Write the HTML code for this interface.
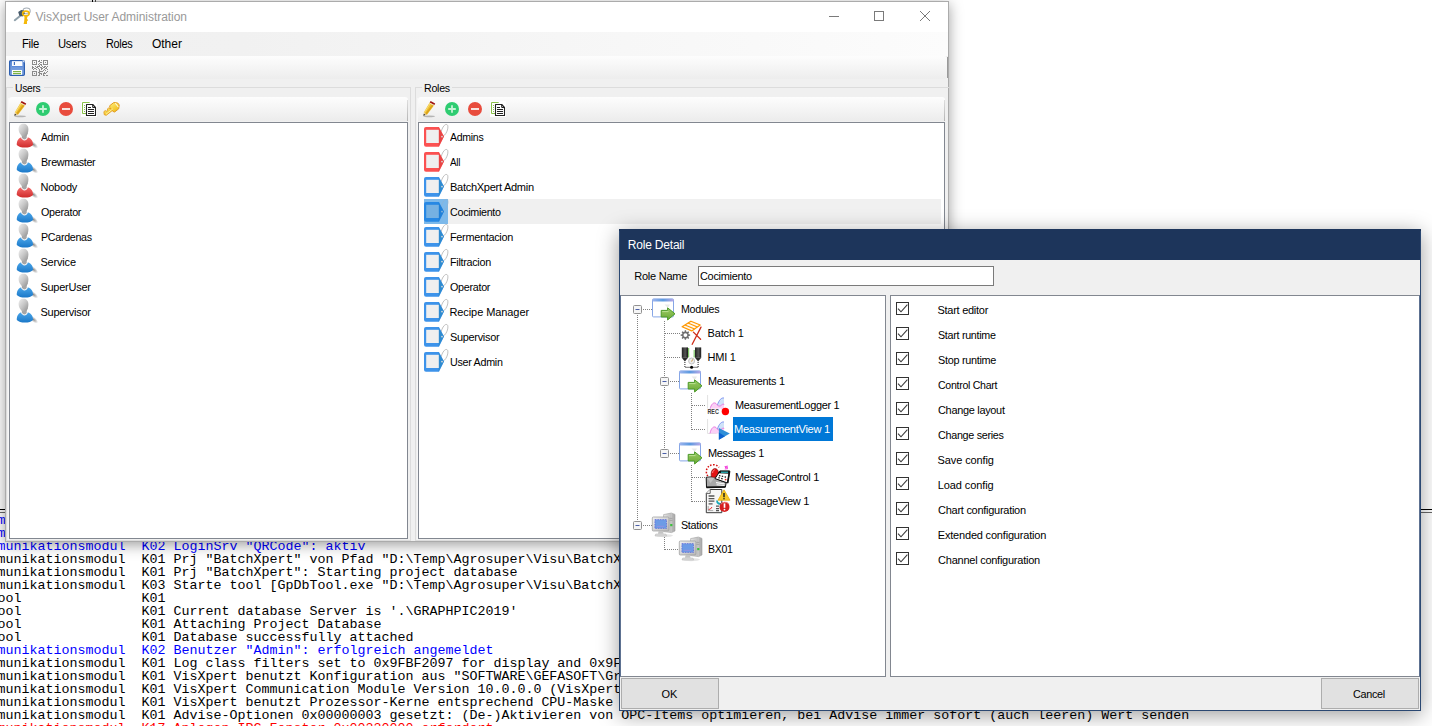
<!DOCTYPE html>
<html><head><meta charset="utf-8"><title>VisXpert User Administration</title>
<style>
*{box-sizing:border-box;margin:0;padding:0}
html,body{width:1432px;height:726px;overflow:hidden;background:#fff}
body{position:relative;font-family:"Liberation Sans",sans-serif;font-size:11px;color:#000}
.abs{position:absolute}
svg{overflow:visible}
.t{position:absolute;white-space:pre;font-family:"Liberation Sans",sans-serif}
.log{position:absolute;left:-2.5px;white-space:pre;font-family:"Liberation Mono",monospace;font-size:13.333px;line-height:13px;height:13px;color:#000}
.log.b{color:#0000ff}.log.r{color:#ff0000}
#main{position:absolute;left:5px;top:1px;width:944px;height:541px;background:#f0f0f0;border:1px solid #ababab;box-shadow:0 3px 13px rgba(0,0,0,.38)}
#dlg{position:absolute;left:619px;top:229px;width:802px;height:482px;background:#f0f0f0;border:1px solid #2b4872;box-shadow:0 4.4px 20px rgba(0,0,0,.39)}
.lb{position:absolute;background:#fff;border:1px solid #828790}
.vd{position:absolute;width:1px;background:repeating-linear-gradient(to bottom,#808080 0,#808080 1px,transparent 1px,transparent 2px)}
.hd{position:absolute;height:1px;background:repeating-linear-gradient(to right,#808080 0,#808080 1px,transparent 1px,transparent 2px)}
</style></head><body>
<svg width="0" height="0" style="position:absolute"><defs>
<linearGradient id="gHead" x1="0" y1="0" x2="1" y2="1"><stop offset="0" stop-color="#efefef"/><stop offset=".5" stop-color="#c6c6c6"/><stop offset="1" stop-color="#8e8e8e"/></linearGradient>
<linearGradient id="gRed" x1="0" y1="0" x2="0" y2="1"><stop offset="0" stop-color="#f46a6a"/><stop offset="1" stop-color="#cf2b2b"/></linearGradient>
<linearGradient id="gBlue" x1="0" y1="0" x2="0" y2="1"><stop offset="0" stop-color="#4aa6ea"/><stop offset="1" stop-color="#1b78c8"/></linearGradient>
<radialGradient id="gSh" cx=".5" cy=".5" r=".5"><stop offset="0" stop-color="#000" stop-opacity=".45"/><stop offset="1" stop-color="#000" stop-opacity="0"/></radialGradient>
<linearGradient id="gWinT" x1="0" y1="0" x2="1" y2="0"><stop offset="0" stop-color="#9fb4ee"/><stop offset=".5" stop-color="#5a9ae0"/><stop offset="1" stop-color="#b9a8e6"/></linearGradient>
<linearGradient id="gArr" x1="0" y1="0" x2="0" y2="1"><stop offset="0" stop-color="#9ccc65"/><stop offset="1" stop-color="#6aa835"/></linearGradient>
<linearGradient id="gSilo" x1="0" y1="0" x2="1" y2="0"><stop offset="0" stop-color="#222"/><stop offset=".55" stop-color="#555"/><stop offset="1" stop-color="#1a1a1a"/></linearGradient>
<linearGradient id="gMon" x1="0" y1="0" x2="1" y2="1"><stop offset="0" stop-color="#f2f2f2"/><stop offset="1" stop-color="#b8b8b8"/></linearGradient>
<linearGradient id="gTow" x1="0" y1="0" x2="1" y2="0"><stop offset="0" stop-color="#e6e6e6"/><stop offset="1" stop-color="#a9a9a9"/></linearGradient>
<linearGradient id="gKey" x1="0" y1="0" x2="0" y2="1"><stop offset="0" stop-color="#fbe468"/><stop offset="1" stop-color="#f1c021"/></linearGradient>
<linearGradient id="gFlop" x1="0" y1="0" x2="0" y2="1"><stop offset="0" stop-color="#5b8ad8"/><stop offset="1" stop-color="#86a9e2"/></linearGradient>
</defs></svg>
<div class="abs" style="left:0;top:509px;width:1432px;height:1px;background:#000"></div>
<div class="abs" style="left:0;top:512px;width:1432px;height:1px;background:#696969"></div>
<div class="abs" style="left:92px;top:0;width:1px;height:2px;background:#000;z-index:5"></div><div class="abs" style="left:95px;top:0;width:1px;height:2px;background:#444;z-index:5"></div>
<div class="log b" style="top:514px">munikationsmodul  K02</div>
<div class="log b" style="top:527px">munikationsmodul  K02</div>
<div class="log b" style="top:540px">munikationsmodul  K02 LoginSrv &quot;QRCode&quot;: aktiv</div>
<div class="log " style="top:553px">munikationsmodul  K01 Prj &quot;BatchXpert&quot; von Pfad &quot;D:\Temp\Agrosuper\Visu\BatchXpert</div>
<div class="log " style="top:566px">munikationsmodul  K01 Prj &quot;BatchXpert&quot;: Starting project database</div>
<div class="log " style="top:579px">munikationsmodul  K03 Starte tool [GpDbTool.exe &quot;D:\Temp\Agrosuper\Visu\BatchXpert</div>
<div class="log " style="top:592px">ool               K01</div>
<div class="log " style="top:605px">ool               K01 Current database Server is &#x27;.\GRAPHPIC2019&#x27;</div>
<div class="log " style="top:618px">ool               K01 Attaching Project Database</div>
<div class="log " style="top:631px">ool               K01 Database successfully attached</div>
<div class="log b" style="top:644px">munikationsmodul  K02 Benutzer &quot;Admin&quot;: erfolgreich angemeldet</div>
<div class="log " style="top:657px">munikationsmodul  K01 Log class filters set to 0x9FBF2097 for display and 0x9FBF2097</div>
<div class="log " style="top:670px">munikationsmodul  K01 VisXpert benutzt Konfiguration aus &quot;SOFTWARE\GEFASOFT\GraphPic</div>
<div class="log " style="top:683px">munikationsmodul  K01 VisXpert Communication Module Version 10.0.0.0 (VisXpert)</div>
<div class="log " style="top:696px">munikationsmodul  K01 VisXpert benutzt Prozessor-Kerne entsprechend CPU-Maske 0xFF</div>
<div class="log " style="top:709px">munikationsmodul  K01 Advise-Optionen 0x00000003 gesetzt: (De-)Aktivieren von OPC-Items optimieren, bei Advise immer sofort (auch leeren) Wert senden</div>
<div class="log r" style="top:722px">munikationsmodul  K17 Anlegen IPC-Fenster 0x00220000 erfordert</div>
<div id="main">
<div class="abs" style="left:0px;top:0px;width:942px;height:30px;background:#fff"></div>
<svg class="abs" style="left:8px;top:5px;" width="18" height="18" viewBox="0 0 18 18"><ellipse cx="12.600" cy="3.900" rx="3.600" ry="2.900" fill="none" stroke="#a4adb6" stroke-width="1.100"/><path d="M7.600 7.800 .8 13.200" stroke="#8fa0aa" stroke-width="2" stroke-linecap="round"/><path d="M4.200 5 7.200 3 10 3.400 10.600 6.600 8.600 9.400 5.400 8.800z" fill="#46596a"/><path d="M8.600 6.400a3.300 2.300 0 1 0 6.600 0a3.300 2.300 0 1 0-6.600 0z" fill="none" stroke="#f3b807" stroke-width="1.600"/><path d="M10.600 8.600h3l-.6 3.400.8.600v1.200l-.8.400v2.800h-3.400l.6-2.800z" fill="#f5b90a"/></svg>
<div class="t" style="left:29.50px;top:8.00px;font-size:12px;line-height:15px;height:15px;letter-spacing:-0.037px;color:#999;">VisXpert User Administration</div>
<svg class="abs" style="left:802px;top:0px;" width="140" height="30" viewBox="0 0 140 30"><g stroke="#7a7a7a" stroke-width="1" fill="none"><path d="M21 14.500h10"/><rect x="66.500" y="9.500" width="9" height="9"/><path d="M112 9l10 10M122 9l-10 10"/></g></svg>
<div class="abs" style="left:0px;top:30px;width:942px;height:24px;background:linear-gradient(to right,#f0f0f0 0,#f1f1f1 25%,#fcfcfc 100%)"></div>
<div class="t" style="left:16.00px;top:35.00px;font-size:12px;line-height:15px;height:15px;letter-spacing:-0.300px;color:#000;transform:scaleX(0.9392);transform-origin:0 0;">File</div>
<div class="t" style="left:51.90px;top:35.00px;font-size:12px;line-height:15px;height:15px;letter-spacing:-0.300px;color:#000;transform:scaleX(0.9396);transform-origin:0 0;">Users</div>
<div class="t" style="left:100.10px;top:35.00px;font-size:12px;line-height:15px;height:15px;letter-spacing:-0.300px;color:#000;transform:scaleX(0.9060);transform-origin:0 0;">Roles</div>
<div class="t" style="left:145.90px;top:35.00px;font-size:12px;line-height:15px;height:15px;letter-spacing:0.000px;color:#000;">Other</div>
<div class="abs" style="left:0px;top:54px;width:941px;height:23px;background:linear-gradient(#fdfdfd,#ededed);border-radius:0 3px 3px 0"></div>
<div class="abs" style="left:941px;top:55px;width:1px;height:21px;background:#9a9a9a"></div>
<svg class="abs" style="left:3px;top:58px;" width="16" height="16" viewBox="0 0 16 16"><rect x=".6" y=".6" width="14.800" height="14.800" rx="1.200" fill="url(#gFlop)" stroke="#2c5fb0" stroke-width="1.200"/><path d="M13.200 .6 15.400 2.800V.6z" fill="#fdfdfd"/><rect x="3" y="1.200" width="10.400" height="4.800" fill="#fafcff"/><rect x="4.800" y="2" width="1.200" height="3" fill="#3f6fc0"/><rect x="3" y="6" width="10.400" height=".8" fill="#4a7bd0" opacity=".6"/><rect x="3" y="10" width="10" height="4.800" fill="#fff"/><rect x="4" y="11" width="8" height="1.200" fill="#7cb342"/><rect x="4" y="13" width="8" height="1.200" fill="#7cb342"/></svg>
<svg class="abs" style="left:26px;top:58px;" width="16" height="16" viewBox="0 0 16 16"><g fill="#8a8a8a"><rect x="0" y="0" width="1" height="1"/><rect x="1" y="0" width="1" height="1"/><rect x="2" y="0" width="1" height="1"/><rect x="3" y="0" width="1" height="1"/><rect x="4" y="0" width="1" height="1"/><rect x="7" y="0" width="1" height="1"/><rect x="9" y="0" width="1" height="1"/><rect x="11" y="0" width="1" height="1"/><rect x="12" y="0" width="1" height="1"/><rect x="13" y="0" width="1" height="1"/><rect x="14" y="0" width="1" height="1"/><rect x="15" y="0" width="1" height="1"/><rect x="0" y="1" width="1" height="1"/><rect x="4" y="1" width="1" height="1"/><rect x="6" y="1" width="1" height="1"/><rect x="7" y="1" width="1" height="1"/><rect x="11" y="1" width="1" height="1"/><rect x="15" y="1" width="1" height="1"/><rect x="0" y="2" width="1" height="1"/><rect x="2" y="2" width="1" height="1"/><rect x="4" y="2" width="1" height="1"/><rect x="8" y="2" width="1" height="1"/><rect x="9" y="2" width="1" height="1"/><rect x="11" y="2" width="1" height="1"/><rect x="13" y="2" width="1" height="1"/><rect x="15" y="2" width="1" height="1"/><rect x="0" y="3" width="1" height="1"/><rect x="4" y="3" width="1" height="1"/><rect x="7" y="3" width="1" height="1"/><rect x="11" y="3" width="1" height="1"/><rect x="15" y="3" width="1" height="1"/><rect x="0" y="4" width="1" height="1"/><rect x="1" y="4" width="1" height="1"/><rect x="2" y="4" width="1" height="1"/><rect x="3" y="4" width="1" height="1"/><rect x="4" y="4" width="1" height="1"/><rect x="6" y="4" width="1" height="1"/><rect x="8" y="4" width="1" height="1"/><rect x="9" y="4" width="1" height="1"/><rect x="11" y="4" width="1" height="1"/><rect x="12" y="4" width="1" height="1"/><rect x="13" y="4" width="1" height="1"/><rect x="14" y="4" width="1" height="1"/><rect x="15" y="4" width="1" height="1"/><rect x="7" y="5" width="1" height="1"/><rect x="9" y="5" width="1" height="1"/><rect x="0" y="6" width="1" height="1"/><rect x="3" y="6" width="1" height="1"/><rect x="5" y="6" width="1" height="1"/><rect x="6" y="6" width="1" height="1"/><rect x="7" y="6" width="1" height="1"/><rect x="10" y="6" width="1" height="1"/><rect x="12" y="6" width="1" height="1"/><rect x="13" y="6" width="1" height="1"/><rect x="15" y="6" width="1" height="1"/><rect x="0" y="7" width="1" height="1"/><rect x="1" y="7" width="1" height="1"/><rect x="4" y="7" width="1" height="1"/><rect x="5" y="7" width="1" height="1"/><rect x="8" y="7" width="1" height="1"/><rect x="9" y="7" width="1" height="1"/><rect x="11" y="7" width="1" height="1"/><rect x="12" y="7" width="1" height="1"/><rect x="14" y="7" width="1" height="1"/><rect x="0" y="8" width="1" height="1"/><rect x="2" y="8" width="1" height="1"/><rect x="3" y="8" width="1" height="1"/><rect x="6" y="8" width="1" height="1"/><rect x="9" y="8" width="1" height="1"/><rect x="10" y="8" width="1" height="1"/><rect x="13" y="8" width="1" height="1"/><rect x="14" y="8" width="1" height="1"/><rect x="1" y="9" width="1" height="1"/><rect x="4" y="9" width="1" height="1"/><rect x="7" y="9" width="1" height="1"/><rect x="9" y="9" width="1" height="1"/><rect x="12" y="9" width="1" height="1"/><rect x="15" y="9" width="1" height="1"/><rect x="7" y="10" width="1" height="1"/><rect x="11" y="10" width="1" height="1"/><rect x="13" y="10" width="1" height="1"/><rect x="0" y="11" width="1" height="1"/><rect x="1" y="11" width="1" height="1"/><rect x="2" y="11" width="1" height="1"/><rect x="3" y="11" width="1" height="1"/><rect x="4" y="11" width="1" height="1"/><rect x="7" y="11" width="1" height="1"/><rect x="8" y="11" width="1" height="1"/><rect x="9" y="11" width="1" height="1"/><rect x="10" y="11" width="1" height="1"/><rect x="15" y="11" width="1" height="1"/><rect x="0" y="12" width="1" height="1"/><rect x="4" y="12" width="1" height="1"/><rect x="6" y="12" width="1" height="1"/><rect x="7" y="12" width="1" height="1"/><rect x="12" y="12" width="1" height="1"/><rect x="14" y="12" width="1" height="1"/><rect x="0" y="13" width="1" height="1"/><rect x="2" y="13" width="1" height="1"/><rect x="4" y="13" width="1" height="1"/><rect x="7" y="13" width="1" height="1"/><rect x="8" y="13" width="1" height="1"/><rect x="9" y="13" width="1" height="1"/><rect x="11" y="13" width="1" height="1"/><rect x="12" y="13" width="1" height="1"/><rect x="13" y="13" width="1" height="1"/><rect x="0" y="14" width="1" height="1"/><rect x="4" y="14" width="1" height="1"/><rect x="7" y="14" width="1" height="1"/><rect x="9" y="14" width="1" height="1"/><rect x="11" y="14" width="1" height="1"/><rect x="0" y="15" width="1" height="1"/><rect x="1" y="15" width="1" height="1"/><rect x="2" y="15" width="1" height="1"/><rect x="3" y="15" width="1" height="1"/><rect x="4" y="15" width="1" height="1"/><rect x="6" y="15" width="1" height="1"/><rect x="7" y="15" width="1" height="1"/><rect x="11" y="15" width="1" height="1"/><rect x="12" y="15" width="1" height="1"/><rect x="14" y="15" width="1" height="1"/><rect x="15" y="15" width="1" height="1"/></g></svg>
<div class="abs" style="left:0px;top:85px;width:405px;height:454px;border:1px solid #dcdcdc"></div>
<div class="abs" style="left:2px;top:96px;width:1px;height:442px;background:#f7f7f7"></div>
<div class="abs" style="left:409px;top:85px;width:534px;height:454px;border:1px solid #dcdcdc;border-right:none"></div>
<div class="abs" style="left:411px;top:96px;width:1px;height:442px;background:#f7f7f7"></div>
<div class="abs" style="left:7px;top:79px;width:31px;height:14px;background:#f0f0f0"></div>
<div class="abs" style="left:416px;top:79px;width:30px;height:14px;background:#f0f0f0"></div>
<div class="t" style="left:8.60px;top:79.00px;font-size:11px;line-height:14px;height:14px;letter-spacing:-0.300px;color:#000;transform:scaleX(0.9353);transform-origin:0 0;">Users</div>
<div class="t" style="left:417.80px;top:79.00px;font-size:11px;line-height:14px;height:14px;letter-spacing:-0.300px;color:#000;transform:scaleX(0.9701);transform-origin:0 0;">Roles</div>
<div class="abs" style="left:3px;top:95px;width:399px;height:24px;background:linear-gradient(#fdfdfd,#ececec);border-radius:3px 3px 0 0"></div>
<div class="abs" style="left:401px;top:98px;width:1px;height:21px;background:linear-gradient(#dedede,#b4b4b4)"></div>
<div class="abs" style="left:412px;top:95px;width:527px;height:24px;background:linear-gradient(#fdfdfd,#ececec);border-radius:3px 3px 0 0"></div>
<div class="abs" style="left:938px;top:98px;width:1px;height:21px;background:linear-gradient(#dedede,#b4b4b4)"></div>
<svg class="abs" style="left:7px;top:99px;" width="16" height="16" viewBox="0 0 16 16"><ellipse cx="7.200" cy="15.300" rx="6" ry=".9" fill="#b4b4b4"/><path d="M1.900 11.200 7.700 1.600 12.400 4 4.800 13.900z" fill="#f0c12f"/><path d="M3.900 12.900 11.200 3.400" stroke="#d9a11c" stroke-width="1.600"/><path d="M2.600 11.400 8.500 2" stroke="#f8dc78" stroke-width="1"/><path d="M7.700 1.600 8.600 0 13.200 2.500 12.400 4z" fill="#9f1212"/><path d="M7.500 2.100 12.200 4.500" stroke="#efe6d2" stroke-width=".9"/><path d="M1.900 11.200 4.800 13.900 1.400 14.600z" fill="#e8cf9a"/><path d="M1.300 14.700 1.900 12.700 3.500 14.100z" fill="#1a1a1a"/></svg>
<svg class="abs" style="left:30px;top:100px;" width="14" height="14" viewBox="0 0 14 14"><circle cx="7" cy="7" r="7" fill="#2ecc71"/><path d="M3.200 7h7.600M7 3.200v7.600" stroke="#c6f2d6" stroke-width="1.800"/></svg>
<svg class="abs" style="left:53px;top:100px;" width="14" height="14" viewBox="0 0 14 14"><circle cx="7" cy="7" r="7" fill="#e84c3d"/><path d="M3 7h8" stroke="#f8e4e0" stroke-width="2"/></svg>
<svg class="abs" style="left:75px;top:99px;" width="16" height="16" viewBox="0 0 16 16"><rect width="16" height="16" fill="#fff"/><path d="M8.700 1.500H1.500V12.500H5" fill="none" stroke="#8bc34a" stroke-width="1"/><path d="M3 4.500h1M3 6.500h1M3 8.500h1M3 10.500h1" stroke="#8bc34a" stroke-width="1"/><path d="M5.500 3.500h6.200l2.800 3v8h-9z" fill="#fff" stroke="#222" stroke-width="1.100" stroke-linejoin="round"/><path d="M11.700 3.500v3h2.800" fill="none" stroke="#222" stroke-width="1"/><path d="M7 6.500h3M7 8.500h6M7 10.500h6M7 12.500h6" stroke="#222" stroke-width="1"/></svg>
<svg class="abs" style="left:416px;top:99px;" width="16" height="16" viewBox="0 0 16 16"><ellipse cx="7.200" cy="15.300" rx="6" ry=".9" fill="#b4b4b4"/><path d="M1.900 11.200 7.700 1.600 12.400 4 4.800 13.900z" fill="#f0c12f"/><path d="M3.900 12.900 11.200 3.400" stroke="#d9a11c" stroke-width="1.600"/><path d="M2.600 11.400 8.500 2" stroke="#f8dc78" stroke-width="1"/><path d="M7.700 1.600 8.600 0 13.200 2.500 12.400 4z" fill="#9f1212"/><path d="M7.500 2.100 12.200 4.500" stroke="#efe6d2" stroke-width=".9"/><path d="M1.900 11.200 4.800 13.900 1.400 14.600z" fill="#e8cf9a"/><path d="M1.300 14.700 1.900 12.700 3.500 14.100z" fill="#1a1a1a"/></svg>
<svg class="abs" style="left:439px;top:100px;" width="14" height="14" viewBox="0 0 14 14"><circle cx="7" cy="7" r="7" fill="#2ecc71"/><path d="M3.200 7h7.600M7 3.200v7.600" stroke="#c6f2d6" stroke-width="1.800"/></svg>
<svg class="abs" style="left:462px;top:100px;" width="14" height="14" viewBox="0 0 14 14"><circle cx="7" cy="7" r="7" fill="#e84c3d"/><path d="M3 7h8" stroke="#f8e4e0" stroke-width="2"/></svg>
<svg class="abs" style="left:484px;top:99px;" width="16" height="16" viewBox="0 0 16 16"><rect width="16" height="16" fill="#fff"/><path d="M8.700 1.500H1.500V12.500H5" fill="none" stroke="#8bc34a" stroke-width="1"/><path d="M3 4.500h1M3 6.500h1M3 8.500h1M3 10.500h1" stroke="#8bc34a" stroke-width="1"/><path d="M5.500 3.500h6.200l2.800 3v8h-9z" fill="#fff" stroke="#222" stroke-width="1.100" stroke-linejoin="round"/><path d="M11.700 3.500v3h2.800" fill="none" stroke="#222" stroke-width="1"/><path d="M7 6.500h3M7 8.500h6M7 10.500h6M7 12.500h6" stroke="#222" stroke-width="1"/></svg>
<svg class="abs" style="left:98px;top:99px;" width="16" height="16" viewBox="0 0 16 16"><g transform="rotate(-38 8 8)"><path d="M-.5 9.400h9.500v-2.800h-2.200l-1-1.500h-1.200l-1 1.500h-1l-1-1.500h-1.600l-1.600 2.600z" fill="url(#gKey)" stroke="#e29a1e" stroke-width=".8" stroke-linejoin="round"/><path d="M8.200 4h5.200l2.800 2.800v2.400l-2.800 2.800h-5.200l-1-1.600v-4.800z" fill="url(#gKey)" stroke="#e29a1e" stroke-width=".9" stroke-linejoin="round"/><path d="M0 8.400h8.500" stroke="#fff3a8" stroke-width=".9"/><path d="M14.200 5.800v4.200" stroke="#fffbe0" stroke-width="1" stroke-linecap="round"/></g></svg>
<div class="abs" style="left:3px;top:120px;width:399px;height:417px;background:#fff;border:1px solid #828790"></div>
<div class="abs" style="left:412px;top:120px;width:527px;height:417px;background:#fff;border:1px solid #828790"></div>
<svg class="abs" style="left:7px;top:121px;" width="26" height="26" viewBox="0 0 26 26"><ellipse cx="20.500" cy="21.500" rx="5.500" ry="2.400" transform="rotate(38 20.500 21.500)" fill="url(#gSh)"/><path d="M3.800 22C3.600 17.400 5.800 14.800 8.800 14.200L11.200 15.400 14 14.200C17.600 14.800 20.200 17.400 20 22 17.600 25.400 6.400 25.400 3.800 22z" fill="url(#gRed)"/><path d="M7.800 14.600C9.600 18.400 13.400 18.400 15 14.400L14 13.600 9 13.800z" fill="#fafafa"/><path d="M8.200 10C8.400 12.400 9.200 13.400 8.800 14.600 10.400 17.200 12.800 17 13.800 14.600 13.400 13 14.400 11.400 14.800 10z" fill="#a6a6a6"/><path d="M5.600 6.200C5.600 2.600 7.800 .8 10.400 .8 13.200 .8 15.400 2.800 15.400 6.200 15.400 9 14.600 11.200 13.400 12.600 12.400 13.800 9.800 13.800 8.600 12.600 6.800 10.800 5.600 8.600 5.600 6.200z" fill="url(#gHead)"/></svg>
<div class="t" style="left:35.40px;top:128.00px;font-size:11px;line-height:14px;height:14px;letter-spacing:-0.300px;color:#000;transform:scaleX(0.9396);transform-origin:0 0;">Admin</div>
<svg class="abs" style="left:7px;top:146px;" width="26" height="26" viewBox="0 0 26 26"><ellipse cx="20.500" cy="21.500" rx="5.500" ry="2.400" transform="rotate(38 20.500 21.500)" fill="url(#gSh)"/><path d="M3.800 22C3.600 17.400 5.800 14.800 8.800 14.200L11.200 15.400 14 14.200C17.600 14.800 20.200 17.400 20 22 17.600 25.400 6.400 25.400 3.800 22z" fill="url(#gBlue)"/><path d="M7.800 14.600C9.600 18.400 13.400 18.400 15 14.400L14 13.600 9 13.800z" fill="#fafafa"/><path d="M8.200 10C8.400 12.400 9.200 13.400 8.800 14.600 10.400 17.200 12.800 17 13.800 14.600 13.400 13 14.400 11.400 14.800 10z" fill="#a6a6a6"/><path d="M5.600 6.200C5.600 2.600 7.800 .8 10.400 .8 13.200 .8 15.400 2.800 15.400 6.200 15.400 9 14.600 11.200 13.400 12.600 12.400 13.800 9.800 13.800 8.600 12.600 6.800 10.800 5.600 8.600 5.600 6.200z" fill="url(#gHead)"/></svg>
<div class="t" style="left:35.40px;top:153.00px;font-size:11px;line-height:14px;height:14px;letter-spacing:-0.300px;color:#000;transform:scaleX(0.9769);transform-origin:0 0;">Brewmaster</div>
<svg class="abs" style="left:7px;top:171px;" width="26" height="26" viewBox="0 0 26 26"><ellipse cx="20.500" cy="21.500" rx="5.500" ry="2.400" transform="rotate(38 20.500 21.500)" fill="url(#gSh)"/><path d="M3.800 22C3.600 17.400 5.800 14.800 8.800 14.200L11.200 15.400 14 14.200C17.600 14.800 20.200 17.400 20 22 17.600 25.400 6.400 25.400 3.800 22z" fill="url(#gRed)"/><path d="M7.800 14.600C9.600 18.400 13.400 18.400 15 14.400L14 13.600 9 13.800z" fill="#fafafa"/><path d="M8.200 10C8.400 12.400 9.200 13.400 8.800 14.600 10.400 17.200 12.800 17 13.800 14.600 13.400 13 14.400 11.400 14.800 10z" fill="#a6a6a6"/><path d="M5.600 6.200C5.600 2.600 7.800 .8 10.400 .8 13.200 .8 15.400 2.800 15.400 6.200 15.400 9 14.600 11.200 13.400 12.600 12.400 13.800 9.800 13.800 8.600 12.600 6.800 10.800 5.600 8.600 5.600 6.200z" fill="url(#gHead)"/></svg>
<div class="t" style="left:34.40px;top:178.00px;font-size:11px;line-height:14px;height:14px;letter-spacing:-0.200px;color:#000;">Nobody</div>
<svg class="abs" style="left:7px;top:196px;" width="26" height="26" viewBox="0 0 26 26"><ellipse cx="20.500" cy="21.500" rx="5.500" ry="2.400" transform="rotate(38 20.500 21.500)" fill="url(#gSh)"/><path d="M3.800 22C3.600 17.400 5.800 14.800 8.800 14.200L11.200 15.400 14 14.200C17.600 14.800 20.200 17.400 20 22 17.600 25.400 6.400 25.400 3.800 22z" fill="url(#gBlue)"/><path d="M7.800 14.600C9.600 18.400 13.400 18.400 15 14.400L14 13.600 9 13.800z" fill="#fafafa"/><path d="M8.200 10C8.400 12.400 9.200 13.400 8.800 14.600 10.400 17.200 12.800 17 13.800 14.600 13.400 13 14.400 11.400 14.800 10z" fill="#a6a6a6"/><path d="M5.600 6.200C5.600 2.600 7.800 .8 10.400 .8 13.200 .8 15.400 2.800 15.400 6.200 15.400 9 14.600 11.200 13.400 12.600 12.400 13.800 9.800 13.800 8.600 12.600 6.800 10.800 5.600 8.600 5.600 6.200z" fill="url(#gHead)"/></svg>
<div class="t" style="left:35.40px;top:203.00px;font-size:11px;line-height:14px;height:14px;letter-spacing:-0.300px;color:#000;transform:scaleX(0.9785);transform-origin:0 0;">Operator</div>
<svg class="abs" style="left:7px;top:221px;" width="26" height="26" viewBox="0 0 26 26"><ellipse cx="20.500" cy="21.500" rx="5.500" ry="2.400" transform="rotate(38 20.500 21.500)" fill="url(#gSh)"/><path d="M3.800 22C3.600 17.400 5.800 14.800 8.800 14.200L11.200 15.400 14 14.200C17.600 14.800 20.200 17.400 20 22 17.600 25.400 6.400 25.400 3.800 22z" fill="url(#gBlue)"/><path d="M7.800 14.600C9.600 18.400 13.400 18.400 15 14.400L14 13.600 9 13.800z" fill="#fafafa"/><path d="M8.200 10C8.400 12.400 9.200 13.400 8.800 14.600 10.400 17.200 12.800 17 13.800 14.600 13.400 13 14.400 11.400 14.800 10z" fill="#a6a6a6"/><path d="M5.600 6.200C5.600 2.600 7.800 .8 10.400 .8 13.200 .8 15.400 2.800 15.400 6.200 15.400 9 14.600 11.200 13.400 12.600 12.400 13.800 9.800 13.800 8.600 12.600 6.800 10.800 5.600 8.600 5.600 6.200z" fill="url(#gHead)"/></svg>
<div class="t" style="left:35.40px;top:228.00px;font-size:11px;line-height:14px;height:14px;letter-spacing:-0.300px;color:#000;transform:scaleX(0.9696);transform-origin:0 0;">PCardenas</div>
<svg class="abs" style="left:7px;top:246px;" width="26" height="26" viewBox="0 0 26 26"><ellipse cx="20.500" cy="21.500" rx="5.500" ry="2.400" transform="rotate(38 20.500 21.500)" fill="url(#gSh)"/><path d="M3.800 22C3.600 17.400 5.800 14.800 8.800 14.200L11.200 15.400 14 14.200C17.600 14.800 20.200 17.400 20 22 17.600 25.400 6.400 25.400 3.800 22z" fill="url(#gBlue)"/><path d="M7.800 14.600C9.600 18.400 13.400 18.400 15 14.400L14 13.600 9 13.800z" fill="#fafafa"/><path d="M8.200 10C8.400 12.400 9.200 13.400 8.800 14.600 10.400 17.200 12.800 17 13.800 14.600 13.400 13 14.400 11.400 14.800 10z" fill="#a6a6a6"/><path d="M5.600 6.200C5.600 2.600 7.800 .8 10.400 .8 13.200 .8 15.400 2.800 15.400 6.200 15.400 9 14.600 11.200 13.400 12.600 12.400 13.800 9.800 13.800 8.600 12.600 6.800 10.800 5.600 8.600 5.600 6.200z" fill="url(#gHead)"/></svg>
<div class="t" style="left:34.40px;top:253.00px;font-size:11px;line-height:14px;height:14px;letter-spacing:-0.167px;color:#000;">Service</div>
<svg class="abs" style="left:7px;top:271px;" width="26" height="26" viewBox="0 0 26 26"><ellipse cx="20.500" cy="21.500" rx="5.500" ry="2.400" transform="rotate(38 20.500 21.500)" fill="url(#gSh)"/><path d="M3.800 22C3.600 17.400 5.800 14.800 8.800 14.200L11.200 15.400 14 14.200C17.600 14.800 20.200 17.400 20 22 17.600 25.400 6.400 25.400 3.800 22z" fill="url(#gBlue)"/><path d="M7.800 14.600C9.600 18.400 13.400 18.400 15 14.400L14 13.600 9 13.800z" fill="#fafafa"/><path d="M8.200 10C8.400 12.400 9.200 13.400 8.800 14.600 10.400 17.200 12.800 17 13.800 14.600 13.400 13 14.400 11.400 14.800 10z" fill="#a6a6a6"/><path d="M5.600 6.200C5.600 2.600 7.800 .8 10.400 .8 13.200 .8 15.400 2.800 15.400 6.200 15.400 9 14.600 11.200 13.400 12.600 12.400 13.800 9.800 13.800 8.600 12.600 6.800 10.800 5.600 8.600 5.600 6.200z" fill="url(#gHead)"/></svg>
<div class="t" style="left:34.40px;top:278.00px;font-size:11px;line-height:14px;height:14px;letter-spacing:-0.250px;color:#000;">SuperUser</div>
<svg class="abs" style="left:7px;top:296px;" width="26" height="26" viewBox="0 0 26 26"><ellipse cx="20.500" cy="21.500" rx="5.500" ry="2.400" transform="rotate(38 20.500 21.500)" fill="url(#gSh)"/><path d="M3.800 22C3.600 17.400 5.800 14.800 8.800 14.200L11.200 15.400 14 14.200C17.600 14.800 20.200 17.400 20 22 17.600 25.400 6.400 25.400 3.800 22z" fill="url(#gBlue)"/><path d="M7.800 14.600C9.600 18.400 13.400 18.400 15 14.400L14 13.600 9 13.800z" fill="#fafafa"/><path d="M8.200 10C8.400 12.400 9.200 13.400 8.800 14.600 10.400 17.200 12.800 17 13.800 14.600 13.400 13 14.400 11.400 14.800 10z" fill="#a6a6a6"/><path d="M5.600 6.200C5.600 2.600 7.800 .8 10.400 .8 13.200 .8 15.400 2.800 15.400 6.200 15.400 9 14.600 11.200 13.400 12.600 12.400 13.800 9.800 13.800 8.600 12.600 6.800 10.800 5.600 8.600 5.600 6.200z" fill="url(#gHead)"/></svg>
<div class="t" style="left:34.40px;top:303.00px;font-size:11px;line-height:14px;height:14px;letter-spacing:-0.222px;color:#000;">Supervisor</div>
<svg class="abs" style="left:417px;top:121px;" width="26" height="26" viewBox="0 0 26 26"><ellipse cx="21.5" cy="7.2" rx="2.7" ry="6.2" transform="rotate(22 21.5 7.2)" fill="none" stroke="#b8b8b8" stroke-width=".8"/><path d="M3 4h13l5 9.6-5 10.2H3a2 2 0 0 1-2-2V6a2 2 0 0 1 2-2z" fill="#fb5151"/><path d="M15.6 4.4 20.8 13.6 15.6 23.6z" fill="#e84545"/><rect x="3.2" y="6.8" width="12.6" height="13.2" fill="#efefef"/><circle cx="19" cy="13.6" r=".9" fill="#d8d8d8"/></svg>
<div class="t" style="left:444.40px;top:128.00px;font-size:11px;line-height:14px;height:14px;letter-spacing:-0.300px;color:#000;transform:scaleX(0.9577);transform-origin:0 0;">Admins</div>
<svg class="abs" style="left:417px;top:146px;" width="26" height="26" viewBox="0 0 26 26"><ellipse cx="21.5" cy="7.2" rx="2.7" ry="6.2" transform="rotate(22 21.5 7.2)" fill="none" stroke="#b8b8b8" stroke-width=".8"/><path d="M3 4h13l5 9.6-5 10.2H3a2 2 0 0 1-2-2V6a2 2 0 0 1 2-2z" fill="#fb5151"/><path d="M15.6 4.4 20.8 13.6 15.6 23.6z" fill="#e84545"/><rect x="3.2" y="6.8" width="12.6" height="13.2" fill="#efefef"/><circle cx="19" cy="13.6" r=".9" fill="#d8d8d8"/></svg>
<div class="t" style="left:444.40px;top:153.00px;font-size:11px;line-height:14px;height:14px;letter-spacing:-0.300px;color:#000;transform:scaleX(0.8961);transform-origin:0 0;">All</div>
<svg class="abs" style="left:417px;top:171px;" width="26" height="26" viewBox="0 0 26 26"><ellipse cx="21.5" cy="7.2" rx="2.7" ry="6.2" transform="rotate(22 21.5 7.2)" fill="none" stroke="#b8b8b8" stroke-width=".8"/><path d="M3 4h13l5 9.6-5 10.2H3a2 2 0 0 1-2-2V6a2 2 0 0 1 2-2z" fill="#3d93ea"/><path d="M15.6 4.4 20.8 13.6 15.6 23.6z" fill="#2f8bd0"/><rect x="3.2" y="6.8" width="12.6" height="13.2" fill="#efefef"/><circle cx="19" cy="13.6" r=".9" fill="#d8d8d8"/></svg>
<div class="t" style="left:444.40px;top:178.00px;font-size:11px;line-height:14px;height:14px;letter-spacing:-0.300px;color:#000;transform:scaleX(1.0060);transform-origin:0 0;">BatchXpert Admin</div>
<div class="abs" style="left:418px;top:197px;width:517px;height:25px;background:#f0f0f0"></div>
<div class="abs" style="left:418px;top:197px;width:24px;height:25px;background:#7db9ea"></div>
<svg class="abs" style="left:417px;top:196px;" width="26" height="26" viewBox="0 0 26 26"><ellipse cx="21.5" cy="7.2" rx="2.7" ry="6.2" transform="rotate(22 21.5 7.2)" fill="none" stroke="#8ab4d8" stroke-width=".8"/><path d="M3 4h13l5 9.6-5 10.2H3a2 2 0 0 1-2-2V6a2 2 0 0 1 2-2z" fill="#2788e4"/><path d="M15.6 4.4 20.8 13.6 15.6 23.6z" fill="#2080d8"/><rect x="3.2" y="6.8" width="12.6" height="13.2" fill="#76b1e2"/><circle cx="19" cy="13.6" r=".9" fill="#8ab4d8"/></svg>
<div class="t" style="left:444.00px;top:203.00px;font-size:11px;line-height:14px;height:14px;letter-spacing:-0.300px;color:#000;transform:scaleX(0.9751);transform-origin:0 0;">Cocimiento</div>
<svg class="abs" style="left:417px;top:221px;" width="26" height="26" viewBox="0 0 26 26"><ellipse cx="21.5" cy="7.2" rx="2.7" ry="6.2" transform="rotate(22 21.5 7.2)" fill="none" stroke="#b8b8b8" stroke-width=".8"/><path d="M3 4h13l5 9.6-5 10.2H3a2 2 0 0 1-2-2V6a2 2 0 0 1 2-2z" fill="#3d93ea"/><path d="M15.6 4.4 20.8 13.6 15.6 23.6z" fill="#2f8bd0"/><rect x="3.2" y="6.8" width="12.6" height="13.2" fill="#efefef"/><circle cx="19" cy="13.6" r=".9" fill="#d8d8d8"/></svg>
<div class="t" style="left:444.40px;top:228.00px;font-size:11px;line-height:14px;height:14px;letter-spacing:-0.300px;color:#000;transform:scaleX(0.9890);transform-origin:0 0;">Fermentacion</div>
<svg class="abs" style="left:417px;top:246px;" width="26" height="26" viewBox="0 0 26 26"><ellipse cx="21.5" cy="7.2" rx="2.7" ry="6.2" transform="rotate(22 21.5 7.2)" fill="none" stroke="#b8b8b8" stroke-width=".8"/><path d="M3 4h13l5 9.6-5 10.2H3a2 2 0 0 1-2-2V6a2 2 0 0 1 2-2z" fill="#3d93ea"/><path d="M15.6 4.4 20.8 13.6 15.6 23.6z" fill="#2f8bd0"/><rect x="3.2" y="6.8" width="12.6" height="13.2" fill="#efefef"/><circle cx="19" cy="13.6" r=".9" fill="#d8d8d8"/></svg>
<div class="t" style="left:444.40px;top:253.00px;font-size:11px;line-height:14px;height:14px;letter-spacing:-0.300px;color:#000;transform:scaleX(0.9815);transform-origin:0 0;">Filtracion</div>
<svg class="abs" style="left:417px;top:271px;" width="26" height="26" viewBox="0 0 26 26"><ellipse cx="21.5" cy="7.2" rx="2.7" ry="6.2" transform="rotate(22 21.5 7.2)" fill="none" stroke="#b8b8b8" stroke-width=".8"/><path d="M3 4h13l5 9.6-5 10.2H3a2 2 0 0 1-2-2V6a2 2 0 0 1 2-2z" fill="#3d93ea"/><path d="M15.6 4.4 20.8 13.6 15.6 23.6z" fill="#2f8bd0"/><rect x="3.2" y="6.8" width="12.6" height="13.2" fill="#efefef"/><circle cx="19" cy="13.6" r=".9" fill="#d8d8d8"/></svg>
<div class="t" style="left:444.30px;top:278.00px;font-size:11px;line-height:14px;height:14px;letter-spacing:-0.300px;color:#000;transform:scaleX(0.9785);transform-origin:0 0;">Operator</div>
<svg class="abs" style="left:417px;top:296px;" width="26" height="26" viewBox="0 0 26 26"><ellipse cx="21.5" cy="7.2" rx="2.7" ry="6.2" transform="rotate(22 21.5 7.2)" fill="none" stroke="#b8b8b8" stroke-width=".8"/><path d="M3 4h13l5 9.6-5 10.2H3a2 2 0 0 1-2-2V6a2 2 0 0 1 2-2z" fill="#3d93ea"/><path d="M15.6 4.4 20.8 13.6 15.6 23.6z" fill="#2f8bd0"/><rect x="3.2" y="6.8" width="12.6" height="13.2" fill="#efefef"/><circle cx="19" cy="13.6" r=".9" fill="#d8d8d8"/></svg>
<div class="t" style="left:443.40px;top:303.00px;font-size:11px;line-height:14px;height:14px;letter-spacing:-0.077px;color:#000;">Recipe Manager</div>
<svg class="abs" style="left:417px;top:321px;" width="26" height="26" viewBox="0 0 26 26"><ellipse cx="21.5" cy="7.2" rx="2.7" ry="6.2" transform="rotate(22 21.5 7.2)" fill="none" stroke="#b8b8b8" stroke-width=".8"/><path d="M3 4h13l5 9.6-5 10.2H3a2 2 0 0 1-2-2V6a2 2 0 0 1 2-2z" fill="#3d93ea"/><path d="M15.6 4.4 20.8 13.6 15.6 23.6z" fill="#2f8bd0"/><rect x="3.2" y="6.8" width="12.6" height="13.2" fill="#efefef"/><circle cx="19" cy="13.6" r=".9" fill="#d8d8d8"/></svg>
<div class="t" style="left:444.40px;top:328.00px;font-size:11px;line-height:14px;height:14px;letter-spacing:-0.300px;color:#000;transform:scaleX(0.9941);transform-origin:0 0;">Supervisor</div>
<svg class="abs" style="left:417px;top:346px;" width="26" height="26" viewBox="0 0 26 26"><ellipse cx="21.5" cy="7.2" rx="2.7" ry="6.2" transform="rotate(22 21.5 7.2)" fill="none" stroke="#b8b8b8" stroke-width=".8"/><path d="M3 4h13l5 9.6-5 10.2H3a2 2 0 0 1-2-2V6a2 2 0 0 1 2-2z" fill="#3d93ea"/><path d="M15.6 4.4 20.8 13.6 15.6 23.6z" fill="#2f8bd0"/><rect x="3.2" y="6.8" width="12.6" height="13.2" fill="#efefef"/><circle cx="19" cy="13.6" r=".9" fill="#d8d8d8"/></svg>
<div class="t" style="left:444.40px;top:353.00px;font-size:11px;line-height:14px;height:14px;letter-spacing:-0.300px;color:#000;transform:scaleX(0.9760);transform-origin:0 0;">User Admin</div>
</div>
<div id="dlg">
<div class="abs" style="left:0px;top:0px;width:800px;height:30px;background:#1d355b"></div>
<div class="abs" style="left:-1px;top:-1px;width:802px;height:2px;background:#1d355b"></div>
<div class="t" style="left:7.80px;top:8.00px;font-size:12px;line-height:15px;height:15px;letter-spacing:-0.200px;color:#fff;">Role Detail</div>
<div class="t" style="left:14.30px;top:39.00px;font-size:11px;line-height:14px;height:14px;letter-spacing:-0.250px;color:#000;">Role Name</div>
<div class="abs" style="left:78px;top:36px;width:296px;height:20px;background:#fff;border:1px solid #7a7a7a"></div>
<div class="t" style="left:79.90px;top:39.00px;font-size:11px;line-height:14px;height:14px;letter-spacing:-0.300px;color:#000;transform:scaleX(0.9943);transform-origin:0 0;">Cocimiento</div>
<div class="abs" style="left:0px;top:65px;width:266px;height:382px;background:#fff;border:1px solid #828790;border-left-color:#5d7191"></div>
<div class="abs" style="left:270px;top:65px;width:530px;height:382px;background:#fff;border:1px solid #828790;border-right-color:#5d7191"></div>
<div class="vd" style="left:17px;top:85px;height:206px"></div>
<div class="hd" style="left:23px;top:79px;width:9px"></div>
<div class="hd" style="left:23px;top:295px;width:9px"></div>
<div class="vd" style="left:44px;top:91px;height:133px"></div>
<div class="hd" style="left:45px;top:103px;width:15px"></div>
<div class="hd" style="left:45px;top:127px;width:15px"></div>
<div class="hd" style="left:50px;top:151px;width:9px"></div>
<div class="hd" style="left:50px;top:223px;width:9px"></div>
<div class="vd" style="left:71px;top:163px;height:37px"></div>
<div class="hd" style="left:72px;top:175px;width:14px"></div>
<div class="hd" style="left:72px;top:199px;width:14px"></div>
<div class="vd" style="left:71px;top:235px;height:37px"></div>
<div class="hd" style="left:72px;top:247px;width:14px"></div>
<div class="hd" style="left:72px;top:271px;width:14px"></div>
<div class="vd" style="left:44px;top:307px;height:13px"></div>
<div class="hd" style="left:45px;top:319px;width:14px"></div>
<svg class="abs" style="left:13px;top:75px;" width="9" height="9" viewBox="0 0 9 9"><rect x=".5" y=".5" width="8" height="8" rx="1" fill="#f6f6f6" stroke="#919191" stroke-width="1"/><path d="M2.500 4.500h4" stroke="#4a5fa8" stroke-width="1"/></svg>
<svg class="abs" style="left:40px;top:147px;" width="9" height="9" viewBox="0 0 9 9"><rect x=".5" y=".5" width="8" height="8" rx="1" fill="#f6f6f6" stroke="#919191" stroke-width="1"/><path d="M2.500 4.500h4" stroke="#4a5fa8" stroke-width="1"/></svg>
<svg class="abs" style="left:40px;top:219px;" width="9" height="9" viewBox="0 0 9 9"><rect x=".5" y=".5" width="8" height="8" rx="1" fill="#f6f6f6" stroke="#919191" stroke-width="1"/><path d="M2.500 4.500h4" stroke="#4a5fa8" stroke-width="1"/></svg>
<svg class="abs" style="left:13px;top:291px;" width="9" height="9" viewBox="0 0 9 9"><rect x=".5" y=".5" width="8" height="8" rx="1" fill="#f6f6f6" stroke="#919191" stroke-width="1"/><path d="M2.500 4.500h4" stroke="#4a5fa8" stroke-width="1"/></svg>
<svg class="abs" style="left:31px;top:67px;" width="26" height="26" viewBox="0 0 26 26"><rect x="1.5" y="1.9" width="21" height="18" rx="1" fill="#fff" stroke="#86a6e6" stroke-width="1"/><rect x="1.5" y="1.9" width="21" height="2.6" rx="1" fill="url(#gWinT)"/><path d="M13.5 7.5h5.500l-1.500 2.500h-1.500z" fill="#e9e9e9"/><path d="M10.200 13.400h6.400v-2.600l7.400 6-7.400 6.200v-3h-6.400z" fill="url(#gArr)" stroke="#4c9a28" stroke-width="1" stroke-linejoin="round"/><path d="M11.200 14.600h6.300" stroke="#c5e8a0" stroke-width=".8"/></svg>
<div class="t" style="left:60.60px;top:72.00px;font-size:11px;line-height:14px;height:14px;letter-spacing:-0.300px;color:#000;transform:scaleX(0.9700);transform-origin:0 0;">Modules</div>
<svg class="abs" style="left:60px;top:90px;" width="26" height="26" viewBox="0 0 26 26"><path d="M2.100 6.700 10.900 1.200 20.200 5 11.700 10.900z" fill="#fff8ee" stroke="#ff9800" stroke-width="1.200" stroke-linejoin="round"/><path d="M5 4.900 14.600 9M8 3 17.400 7" stroke="#ff9800" stroke-width="1.100"/><polygon points="10.16,14.48 10.16,15.72 8.74,16.00 8.39,16.83 9.21,18.03 8.33,18.91 7.13,18.09 6.30,18.44 6.02,19.86 4.78,19.86 4.50,18.44 3.67,18.09 2.47,18.91 1.59,18.03 2.41,16.83 2.06,16.00 0.64,15.72 0.64,14.48 2.06,14.20 2.41,13.37 1.59,12.17 2.47,11.29 3.67,12.11 4.50,11.76 4.78,10.34 6.02,10.34 6.30,11.76 7.13,12.11 8.33,11.29 9.21,12.17 8.39,13.37 8.74,14.20" fill="#6f6f6f"/><circle cx="5.4" cy="15.1" r="1.9" fill="#fff"/><path d="M21 7.100 12.200 24.300M13.400 12.100 20.600 19.300" stroke="#cf2e1a" stroke-width="1.300" stroke-linecap="round"/></svg>
<div class="t" style="left:87.60px;top:96.00px;font-size:11px;line-height:14px;height:14px;letter-spacing:-0.167px;color:#000;">Batch 1</div>
<svg class="abs" style="left:60px;top:116px;" width="26" height="26" viewBox="0 0 26 26"><rect x="1.800" y="1.400" width="6.200" height="10.400" fill="url(#gSilo)"/><path d="M1.800 11.800h6.200l-3.100 3.600z" fill="#2a2a2a"/><rect x="15" y="1.400" width="6.200" height="10.400" fill="url(#gSilo)"/><path d="M15 11.800h6.200l-3.100 3.600z" fill="#2a2a2a"/><rect x="8" y="2" width="1.200" height="9.400" fill="#7cc464"/><rect x="13.600" y="4" width="1.200" height="7.400" fill="#7cc464"/><circle cx="11.600" cy="15" r="3" fill="#ececec" stroke="#b4b4b4" stroke-width=".8"/><path d="M11.600 15.600 12.600 13.400" stroke="#c89030" stroke-width=".9"/><path d="M4.900 16v5M18.100 16v5" stroke="#222" stroke-width="1" stroke-dasharray="1 1"/><path d="M5 21.300h13.200" stroke="#555" stroke-width=".8"/><circle cx="11.600" cy="21.300" r="1.500" fill="#000"/></svg>
<div class="t" style="left:87.60px;top:120.00px;font-size:11px;line-height:14px;height:14px;letter-spacing:-0.250px;color:#000;">HMI 1</div>
<svg class="abs" style="left:58px;top:139px;" width="26" height="26" viewBox="0 0 26 26"><rect x="1.5" y="1.9" width="21" height="18" rx="1" fill="#fff" stroke="#86a6e6" stroke-width="1"/><rect x="1.5" y="1.9" width="21" height="2.6" rx="1" fill="url(#gWinT)"/><path d="M13.5 7.5h5.500l-1.500 2.500h-1.500z" fill="#e9e9e9"/><path d="M10.200 13.400h6.400v-2.600l7.400 6-7.400 6.200v-3h-6.400z" fill="url(#gArr)" stroke="#4c9a28" stroke-width="1" stroke-linejoin="round"/><path d="M11.200 14.600h6.300" stroke="#c5e8a0" stroke-width=".8"/></svg>
<div class="t" style="left:87.60px;top:144.00px;font-size:11px;line-height:14px;height:14px;letter-spacing:-0.300px;color:#000;transform:scaleX(0.9859);transform-origin:0 0;">Measurements 1</div>
<svg class="abs" style="left:86px;top:164px;" width="26" height="26" viewBox="0 0 26 26"><path d="M1.600 1v14.500h9" fill="none" stroke="#e2e2e2" stroke-width="1"/><path d="M11.400 11C13 6 15.500 3.400 18 4v10h-6.600z" fill="#cfe2f8"/><path d="M11.400 11C13 6 15.500 3.400 18 4" fill="none" stroke="#7a8ff0" stroke-width=".9"/><path d="M4 15.400C5 10 8 7.600 10 9.600 12 12.400 14 12.800 15.600 11 17 9.600 18 10 18 11v4.400z" fill="#fbd0f6"/><path d="M4 15.400C5 10 8 7.600 10 9.600 12 12.400 14 12.800 15.600 11 17 9.600 18 10 18 11" fill="none" stroke="#e472dc" stroke-width=".9"/><rect x="1" y="14.600" width="14" height="6" fill="#fff"/><text x="1.400" y="20" font-family="Liberation Sans, sans-serif" font-weight="bold" font-size="6.300" fill="#3a3a3a" textLength="11.400" lengthAdjust="spacingAndGlyphs">REC</text><circle cx="19.400" cy="17.500" r="3.700" fill="#ff0000"/></svg>
<div class="t" style="left:114.60px;top:168.00px;font-size:11px;line-height:14px;height:14px;letter-spacing:-0.300px;color:#000;transform:scaleX(0.9943);transform-origin:0 0;">MeasurementLogger 1</div>
<svg class="abs" style="left:86px;top:188px;" width="26" height="26" viewBox="0 0 26 26"><path d="M1.600 1v14.500h9" fill="none" stroke="#e2e2e2" stroke-width="1"/><path d="M11.400 11C13 6 15.500 3.400 18 4v10h-6.600z" fill="#cfe2f8"/><path d="M11.400 11C13 6 15.500 3.400 18 4" fill="none" stroke="#7a8ff0" stroke-width=".9"/><path d="M4 15.400C5 10 8 7.600 10 9.600 12 12.400 14 12.800 15.600 11 17 9.600 18 10 18 11v4.400z" fill="#fbd0f6"/><path d="M4 15.400C5 10 8 7.600 10 9.600 12 12.400 14 12.800 15.600 11 17 9.600 18 10 18 11" fill="none" stroke="#e472dc" stroke-width=".9"/><path d="M12.900 9.900 23.800 15.600 12.900 21.700z" fill="#2f8fd8"/><path d="M12.900 14.500 19 18.300 12.900 21.700z" fill="#0c62d0"/></svg>
<div class="abs" style="left:113px;top:187px;width:100px;height:24px;background:#0078d7"></div>
<div class="t" style="left:113.60px;top:192.00px;font-size:11px;line-height:14px;height:14px;letter-spacing:-0.300px;color:#fff;transform:scaleX(1.0084);transform-origin:0 0;">MeasurementView 1</div>
<svg class="abs" style="left:58px;top:211px;" width="26" height="26" viewBox="0 0 26 26"><rect x="1.5" y="1.9" width="21" height="18" rx="1" fill="#fff" stroke="#86a6e6" stroke-width="1"/><rect x="1.5" y="1.9" width="21" height="2.6" rx="1" fill="url(#gWinT)"/><path d="M13.5 7.5h5.500l-1.500 2.500h-1.500z" fill="#e9e9e9"/><path d="M10.200 13.400h6.400v-2.600l7.400 6-7.400 6.200v-3h-6.400z" fill="url(#gArr)" stroke="#4c9a28" stroke-width="1" stroke-linejoin="round"/><path d="M11.200 14.600h6.300" stroke="#c5e8a0" stroke-width=".8"/></svg>
<div class="t" style="left:87.60px;top:216.00px;font-size:11px;line-height:14px;height:14px;letter-spacing:-0.300px;color:#000;transform:scaleX(0.9947);transform-origin:0 0;">Messages 1</div>
<svg class="abs" style="left:85px;top:234px;" width="26" height="26" viewBox="0 0 26 26"><path d="M2.800 12A7 7 0 0 1 14 3.400" fill="none" stroke="#d81010" stroke-width="1.500" stroke-dasharray="1.500 1.500"/><path d="M1.200 13.300 10.400 12.600 14 16 21.200 18.400 20.400 23 1.500 23.400z" fill="#a8a8a8" stroke="#111" stroke-width="1" stroke-linejoin="round"/><path d="M1.800 13.800 9.800 13.200 5.600 19z" fill="#c2c2c2"/><path d="M11 18.600 19.600 19.900M11.600 20.700 19.400 21.500" stroke="#f6f6f6" stroke-width="1.100"/><path d="M1.500 23.400 20.400 23" stroke="#111" stroke-width="1.600"/><path d="M6.400 12.800C5.400 8 7.400 4.600 10 4.600 12.600 4.600 14.200 7.600 13 11.200L10 13.400z" fill="#e31414" stroke="#6a0808" stroke-width=".6"/><path d="M7.600 9C7.600 7.200 8.600 6 9.800 5.800" stroke="#ff9090" stroke-width=".9" fill="none"/><path d="M18.600 1.600 23.400 1.200 24 5.800 19 6.200z" fill="#fff"/><path d="M19.600 2.600l3-.4-2.600 1.600 3-.2M19.800 5l3.200-.4" stroke="#f03ad8" stroke-width=".9" fill="none"/><path d="M15 7 24.600 7 22.600 19 10 14.600z" fill="#fff" stroke="#111" stroke-width="1" stroke-linejoin="round"/><path d="M14.600 6.800 24.800 6.800 24.300 9.800 12.800 9.200z" fill="#111"/><path d="M16 8.200h7" stroke="#2fd0d8" stroke-width="1.100"/><path d="M14 11.600l1.400.3M16.800 12.200l1.400.3M19.600 12.800l1.400.3M13.400 13.600l1.400.4M16.200 14.400l1.400.4" stroke="#111" stroke-width="1.200"/><circle cx="20.600" cy="15.600" r=".9" fill="#e22"/><path d="M24.600 7 22.600 19" stroke="#111" stroke-width="1.600"/></svg>
<div class="t" style="left:114.60px;top:240.00px;font-size:11px;line-height:14px;height:14px;letter-spacing:-0.300px;color:#000;transform:scaleX(0.9940);transform-origin:0 0;">MessageControl 1</div>
<svg class="abs" style="left:85px;top:258px;" width="26" height="26" viewBox="0 0 26 26"><path d="M5.200 1.500h11.600v23.200H1.300V5.400z" fill="#f6f6f6" stroke="#3a3a3a" stroke-width="1"/><path d="M5.200 1.500v3.900H1.300" fill="#fff" stroke="#3a3a3a" stroke-width=".8"/><path d="M3.600 8h5.800M3.600 10.600h5.800M3.600 13.200h5.800M3.600 15.800h4M11 18.200h3M11 20.600h3M11 22.600h3" stroke="#555" stroke-width="1.300"/><path d="M3.400 21.600l2-.6 1.600-2" stroke="#e53030" stroke-width="1" fill="none"/><path d="M3.200 18v4.600h5" stroke="#888" stroke-width=".7" fill="none"/><path d="M12 12.400c0 2.600 2 3.800 4.200 3.400" stroke="#19a7b8" stroke-width="1.800" fill="none"/><path d="M19 1.800 25 12.200H13z" fill="#f7c92a" stroke="#e5ad12" stroke-width=".8" stroke-linejoin="round"/><path d="M19 5v4.200" stroke="#222" stroke-width="1.500"/><circle cx="19" cy="10.700" r=".8" fill="#222"/><circle cx="19.500" cy="18.900" r="5" fill="#d61f1f"/><path d="M16 16.200a5 5 0 0 1 7-1" stroke="#f08080" stroke-width="1" fill="none"/><path d="M19.500 15.400v4.400" stroke="#fff" stroke-width="1.700"/><circle cx="19.500" cy="21.600" r=".9" fill="#fff"/></svg>
<div class="t" style="left:114.60px;top:264.00px;font-size:11px;line-height:14px;height:14px;letter-spacing:-0.300px;color:#000;transform:scaleX(1.0082);transform-origin:0 0;">MessageView 1</div>
<svg class="abs" style="left:31px;top:282px;" width="26" height="26" viewBox="0 0 26 26"><ellipse cx="13" cy="23.600" rx="9" ry="1.600" fill="#000" opacity=".10"/><path d="M12.600 2.600 20.400 1l3.600 1.400v16.600l-3.400 1.600-8-1z" fill="url(#gTow)" stroke="#a0a0a0" stroke-width=".6"/><path d="M20.400 1v19.400" stroke="#c8c8c8" stroke-width=".7"/><path d="M18.400 6.400h3M18.400 8.400h3" stroke="#999" stroke-width=".7"/><rect x="19.200" y="12" width="2.200" height="2.200" fill="#3cc03c"/><rect x="1.300" y="5" width="16.600" height="14" rx="1" fill="url(#gMon)" stroke="#9a9a9a" stroke-width=".7"/><rect x="3.900" y="7.600" width="11.600" height="8.800" fill="#6d9be6" stroke="#5a60d8" stroke-width=".7" stroke-dasharray="1.500 1"/><path d="M6 14.300h7" stroke="#a78be0" stroke-width=".7"/><path d="M7.600 19h4.400l.6 2.800h-5.600z" fill="#c4c4c4"/><path d="M4.800 22h10l.8 2h-11.600z" fill="#dcdcdc" stroke="#b0b0b0" stroke-width=".5"/></svg>
<div class="t" style="left:60.60px;top:288.00px;font-size:11px;line-height:14px;height:14px;letter-spacing:-0.300px;color:#000;transform:scaleX(0.9763);transform-origin:0 0;">Stations</div>
<svg class="abs" style="left:58px;top:306px;" width="26" height="26" viewBox="0 0 26 26"><ellipse cx="13" cy="23.600" rx="9" ry="1.600" fill="#000" opacity=".10"/><path d="M12.600 2.600 20.400 1l3.600 1.400v16.600l-3.400 1.600-8-1z" fill="url(#gTow)" stroke="#a0a0a0" stroke-width=".6"/><path d="M20.400 1v19.400" stroke="#c8c8c8" stroke-width=".7"/><path d="M18.400 6.400h3M18.400 8.400h3" stroke="#999" stroke-width=".7"/><rect x="19.200" y="12" width="2.200" height="2.200" fill="#3cc03c"/><rect x="1.300" y="5" width="16.600" height="14" rx="1" fill="url(#gMon)" stroke="#9a9a9a" stroke-width=".7"/><rect x="3.900" y="7.600" width="11.600" height="8.800" fill="#6d9be6" stroke="#5a60d8" stroke-width=".7" stroke-dasharray="1.500 1"/><path d="M6 14.300h7" stroke="#a78be0" stroke-width=".7"/><path d="M7.600 19h4.400l.6 2.800h-5.600z" fill="#c4c4c4"/><path d="M4.800 22h10l.8 2h-11.600z" fill="#dcdcdc" stroke="#b0b0b0" stroke-width=".5"/></svg>
<div class="t" style="left:87.60px;top:312.00px;font-size:11px;line-height:14px;height:14px;letter-spacing:-0.300px;color:#000;transform:scaleX(0.9579);transform-origin:0 0;">BX01</div>
<div class="abs" style="left:276px;top:72px;width:13px;height:13px;background:#fff;border:1px solid #333"></div>
<svg class="abs" style="left:276px;top:72px;" width="13" height="13" viewBox="0 0 13 13"><path d="M2 6.600 5 9.800 11.400 2.600" fill="none" stroke="#3a3a3a" stroke-width="1.100"/></svg>
<div class="t" style="left:317.50px;top:73.00px;font-size:11px;line-height:14px;height:14px;letter-spacing:-0.273px;color:#000;">Start editor</div>
<div class="abs" style="left:276px;top:97px;width:13px;height:13px;background:#fff;border:1px solid #333"></div>
<svg class="abs" style="left:276px;top:97px;" width="13" height="13" viewBox="0 0 13 13"><path d="M2 6.600 5 9.800 11.400 2.600" fill="none" stroke="#3a3a3a" stroke-width="1.100"/></svg>
<div class="t" style="left:317.50px;top:98.00px;font-size:11px;line-height:14px;height:14px;letter-spacing:-0.300px;color:#000;transform:scaleX(0.9764);transform-origin:0 0;">Start runtime</div>
<div class="abs" style="left:276px;top:122px;width:13px;height:13px;background:#fff;border:1px solid #333"></div>
<svg class="abs" style="left:276px;top:122px;" width="13" height="13" viewBox="0 0 13 13"><path d="M2 6.600 5 9.800 11.400 2.600" fill="none" stroke="#3a3a3a" stroke-width="1.100"/></svg>
<div class="t" style="left:317.50px;top:123.00px;font-size:11px;line-height:14px;height:14px;letter-spacing:-0.300px;color:#000;transform:scaleX(0.9881);transform-origin:0 0;">Stop runtime</div>
<div class="abs" style="left:276px;top:147px;width:13px;height:13px;background:#fff;border:1px solid #333"></div>
<svg class="abs" style="left:276px;top:147px;" width="13" height="13" viewBox="0 0 13 13"><path d="M2 6.600 5 9.800 11.400 2.600" fill="none" stroke="#3a3a3a" stroke-width="1.100"/></svg>
<div class="t" style="left:318.10px;top:148.00px;font-size:11px;line-height:14px;height:14px;letter-spacing:-0.300px;color:#000;transform:scaleX(0.9615);transform-origin:0 0;">Control Chart</div>
<div class="abs" style="left:276px;top:172px;width:13px;height:13px;background:#fff;border:1px solid #333"></div>
<svg class="abs" style="left:276px;top:172px;" width="13" height="13" viewBox="0 0 13 13"><path d="M2 6.600 5 9.800 11.400 2.600" fill="none" stroke="#3a3a3a" stroke-width="1.100"/></svg>
<div class="t" style="left:318.10px;top:173.00px;font-size:11px;line-height:14px;height:14px;letter-spacing:-0.300px;color:#000;transform:scaleX(0.9941);transform-origin:0 0;">Change layout</div>
<div class="abs" style="left:276px;top:197px;width:13px;height:13px;background:#fff;border:1px solid #333"></div>
<svg class="abs" style="left:276px;top:197px;" width="13" height="13" viewBox="0 0 13 13"><path d="M2 6.600 5 9.800 11.400 2.600" fill="none" stroke="#3a3a3a" stroke-width="1.100"/></svg>
<div class="t" style="left:318.10px;top:198.00px;font-size:11px;line-height:14px;height:14px;letter-spacing:-0.300px;color:#000;transform:scaleX(0.9792);transform-origin:0 0;">Change series</div>
<div class="abs" style="left:276px;top:222px;width:13px;height:13px;background:#fff;border:1px solid #333"></div>
<svg class="abs" style="left:276px;top:222px;" width="13" height="13" viewBox="0 0 13 13"><path d="M2 6.600 5 9.800 11.400 2.600" fill="none" stroke="#3a3a3a" stroke-width="1.100"/></svg>
<div class="t" style="left:317.50px;top:223.00px;font-size:11px;line-height:14px;height:14px;letter-spacing:-0.100px;color:#000;">Save config</div>
<div class="abs" style="left:276px;top:247px;width:13px;height:13px;background:#fff;border:1px solid #333"></div>
<svg class="abs" style="left:276px;top:247px;" width="13" height="13" viewBox="0 0 13 13"><path d="M2 6.600 5 9.800 11.400 2.600" fill="none" stroke="#3a3a3a" stroke-width="1.100"/></svg>
<div class="t" style="left:317.80px;top:248.00px;font-size:11px;line-height:14px;height:14px;letter-spacing:-0.100px;color:#000;">Load config</div>
<div class="abs" style="left:276px;top:272px;width:13px;height:13px;background:#fff;border:1px solid #333"></div>
<svg class="abs" style="left:276px;top:272px;" width="13" height="13" viewBox="0 0 13 13"><path d="M2 6.600 5 9.800 11.400 2.600" fill="none" stroke="#3a3a3a" stroke-width="1.100"/></svg>
<div class="t" style="left:318.10px;top:273.00px;font-size:11px;line-height:14px;height:14px;letter-spacing:-0.278px;color:#000;">Chart configuration</div>
<div class="abs" style="left:276px;top:297px;width:13px;height:13px;background:#fff;border:1px solid #333"></div>
<svg class="abs" style="left:276px;top:297px;" width="13" height="13" viewBox="0 0 13 13"><path d="M2 6.600 5 9.800 11.400 2.600" fill="none" stroke="#3a3a3a" stroke-width="1.100"/></svg>
<div class="t" style="left:317.80px;top:298.00px;font-size:11px;line-height:14px;height:14px;letter-spacing:-0.190px;color:#000;">Extended configuration</div>
<div class="abs" style="left:276px;top:322px;width:13px;height:13px;background:#fff;border:1px solid #333"></div>
<svg class="abs" style="left:276px;top:322px;" width="13" height="13" viewBox="0 0 13 13"><path d="M2 6.600 5 9.800 11.400 2.600" fill="none" stroke="#3a3a3a" stroke-width="1.100"/></svg>
<div class="t" style="left:318.10px;top:323.00px;font-size:11px;line-height:14px;height:14px;letter-spacing:-0.250px;color:#000;">Channel configuration</div>
<div class="abs" style="left:1px;top:448px;width:98px;height:31px;background:#e1e1e1;border:1px solid #adadad"></div>
<div class="t" style="left:41.50px;top:457.00px;font-size:11px;line-height:14px;height:14px;letter-spacing:0.000px;color:#000;">OK</div>
<div class="abs" style="left:701px;top:448px;width:98px;height:31px;background:#e1e1e1;border:1px solid #adadad"></div>
<div class="t" style="left:733.00px;top:457.00px;font-size:11px;line-height:14px;height:14px;letter-spacing:-0.300px;color:#000;transform:scaleX(0.9846);transform-origin:0 0;">Cancel</div>
</div>
</body></html>
